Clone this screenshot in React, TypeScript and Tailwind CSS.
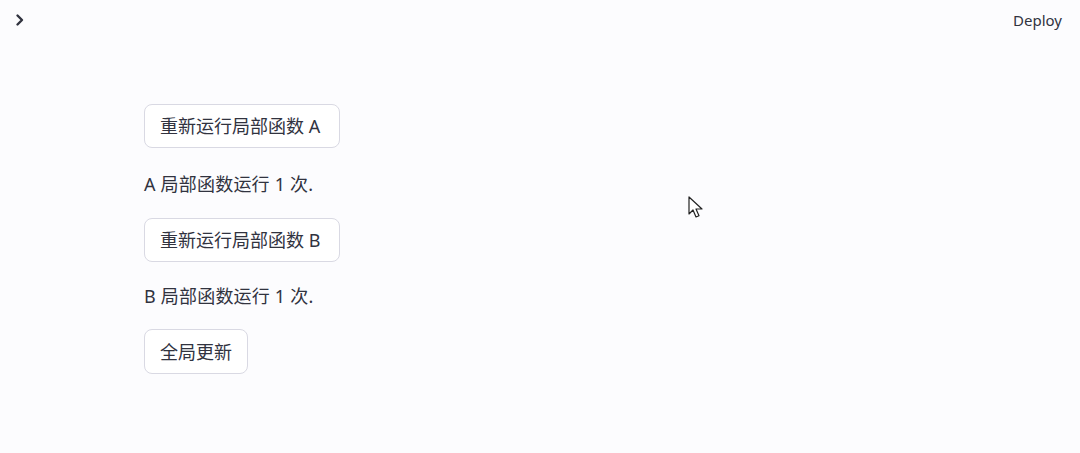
import React from "react";

const font = { fontFamily: '"Noto Sans", "Noto Sans CJK SC", sans-serif' };

function Btn({ children, wide }: { children: React.ReactNode; wide?: boolean }) {
  return (
    <button
      className={
        wide
          ? "self-start h-[44px] pl-[15px] pr-[19px] rounded-[8px] border border-[#d9d9e3] bg-white text-[18px] leading-none text-[#31333f]"
          : "self-start h-[45px] px-[15px] rounded-[8px] border border-[#d9d9e3] bg-white text-[18px] leading-none text-[#31333f]"
      }
    >
      {children}
    </button>
  );
}

export default function App() {
  return (
    <div className="relative w-[1080px] h-[453px] bg-[#fcfcfe] overflow-hidden text-[#31333f]" style={font}>
      <div className="flex items-start justify-between h-[40px] pl-[14px] pr-[18px] pt-[10px]">
        <svg width="12" height="14" viewBox="0 0 12 14" className="mt-[3px]">
          <path d="M3.5 2.5 L8 7 L3.5 11.5" fill="none" stroke="#31333f" strokeWidth="2.4" strokeLinecap="round" strokeLinejoin="round" />
        </svg>
        <span className="text-[15px] leading-[20px] text-[#31333f]">Deploy</span>
      </div>
      <div className="flex flex-col pl-[144px] pt-[64px]">
        <Btn wide>重新运行局部函数 A</Btn>
        <p className="mt-[22px] h-[28px] text-[18px] leading-[28px] tracking-[0.2px]">A 局部函数运行 1 次.</p>
        <div className="mt-[20px] flex flex-col">
          <Btn wide>重新运行局部函数 B</Btn>
        </div>
        <p className="mt-[20px] h-[28px] text-[18px] leading-[28px] tracking-[0.2px]">B 局部函数运行 1 次.</p>
        <div className="mt-[19px] flex flex-col">
          <Btn>全局更新</Btn>
        </div>
      </div>
      <svg className="absolute left-[688px] top-[196px]" width="18" height="24" viewBox="0 0 18 24">
        <path d="M1 1 L1 18 L5 14 L8 21 L11 19.8 L8 13 L14 13 Z" fill="white" stroke="#222" strokeWidth="1.2" strokeLinejoin="round" />
      </svg>
    </div>
  );
}
